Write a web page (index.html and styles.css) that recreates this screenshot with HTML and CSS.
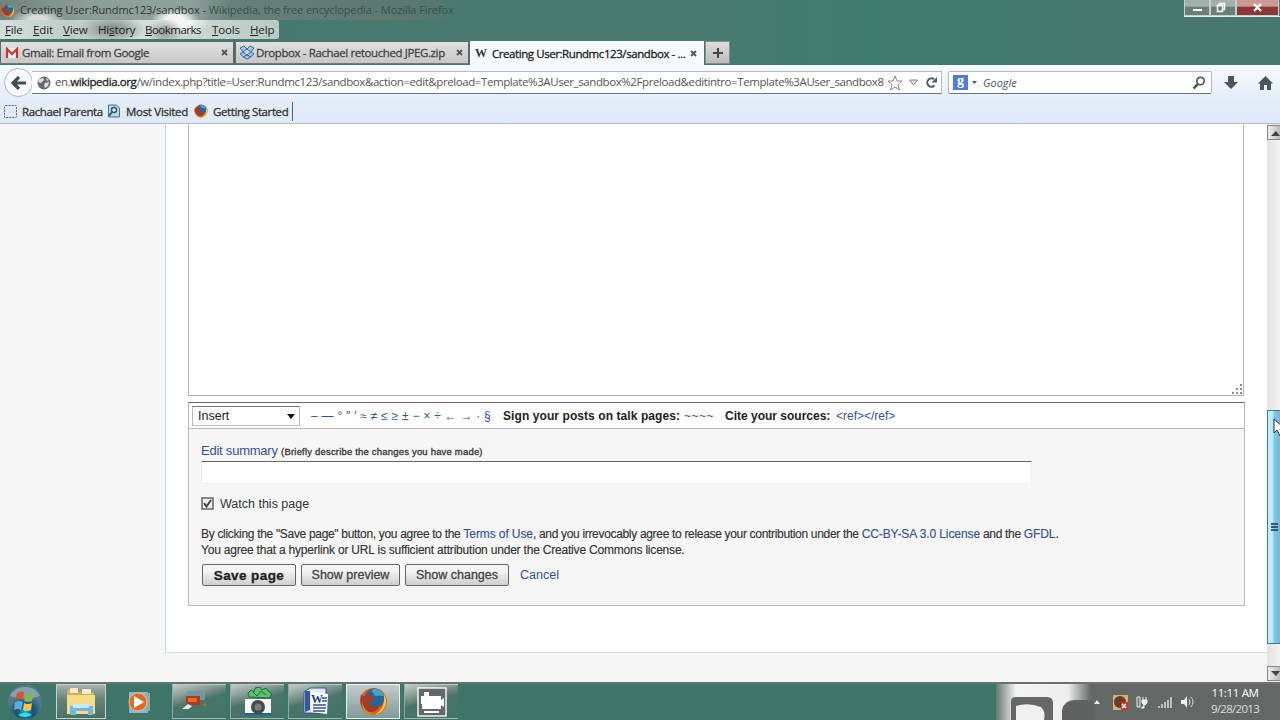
FILE: index.html
```html
<!DOCTYPE html>
<html lang="en">
<head>
    <meta charset="UTF-8">
    <title>Creating User:Rundmc123/sandbox</title>
    <link rel="stylesheet" href="styles.css">
</head>
<body>
    <svg class="defs" width="0" height="0">
        <symbol id="firefox" viewBox="0 0 28 28">
            <circle cx="14" cy="14" r="13" fill="#d9601d"/>
            <circle cx="15" cy="11" r="9.5" fill="#236799"/>
            <path d="M12 3c5-3 11 0 12 6-4-2-6 1-9-1z" fill="#4ba4c8"/>
            <path d="M2 7c2 2 3 2 5 2 1-2 3-3 5-3-1 3 0 4 3 5-2 3-5 3-5 5 2 4 7 4 10 1-1 6-6 8-11 7C3 22 0 15 2 7z" fill="#a43b25"/>
            <path d="M24 7c5 8 1 18-9 20 8-5 10-11 9-20z" fill="#f5ca35"/>
            <path d="M3 14c1 7 5 11 12 12-7 2-13-4-12-12z" fill="#ee8b20"/>
        </symbol>
    </svg>

    <header class="frame">
        <div class="titlebar">
            <svg class="title-icon" width="14" height="15"><use href="#firefox"/></svg>
            <span class="title-text">Creating User:Rundmc123/sandbox - <i>Wikipedia, the free encyclopedia - Mozilla Firefox</i></span>
            <div class="window-buttons">
                <span class="win-btn"><svg width="24" height="15"><path d="M8 9h9v2H8z" fill="#fff"/></svg></span>
                <span class="win-btn"><svg width="24" height="15"><path d="M6.500 5.500h5v6h-5zM8.500 5V3.500h5v6H12" fill="none" stroke="#fff" stroke-width="1.500"/></svg></span>
                <span class="win-btn close"><svg width="42" height="15"><path d="M17 4l7 7M24 4l-7 7" stroke="#fff" stroke-width="2.200"/></svg></span>
            </div>
        </div>
        <nav class="menubar">
            <span class="m-file"><u>F</u>ile</span>
            <span class="m-edit"><u>E</u>dit</span>
            <span class="m-view"><u>V</u>iew</span>
            <span class="m-history">Hi<u>s</u>tory</span>
            <span class="m-bookmarks"><u>B</u>ookmarks</span>
            <span class="m-tools"><u>T</u>ools</span>
            <span class="m-help"><u>H</u>elp</span>
        </nav>
        <div class="tabs">
            <div class="tab">
                <svg width="14" height="12" viewBox="0 0 14 12"><path d="M1 1h12v10H1z" fill="#eee"/><path d="M2 11V2l5 5 5-5v9" fill="none" stroke="#bd3934" stroke-width="2.200"/></svg>
                <span class="tab-text">Gmail: Email from Google</span>
                <svg class="x" width="7" height="7"><path d="M1 1l5 5M6 1L1 6" stroke="#555" stroke-width="1.800"/></svg>
            </div>
            <div class="tab">
                <svg width="16" height="15" viewBox="0 0 16 15"><g fill="#9fcbee" stroke="#316b9e"><path d="M1 3l4-2 3 3-4 3zM15 3l-4-2-3 3 4 3zM1 9l3-2 4 3-3 2zM15 9l-3-2-4 3 3 2z"/><path d="M4 12l4-2 4 2-4 2z"/></g></svg>
                <span class="tab-text">Dropbox - Rachael retouched JPEG.zip</span>
                <svg class="x" width="7" height="7"><path d="M1 1l5 5M6 1L1 6" stroke="#555" stroke-width="1.800"/></svg>
            </div>
            <div class="tab active">
                <span class="wiki">W</span>
                <span class="tab-text">Creating User:Rundmc123/sandbox - ...</span>
                <svg class="x" width="7" height="7"><path d="M1 1l5 5M6 1L1 6" stroke="#555" stroke-width="1.800"/></svg>
            </div>
            <div class="new-tab"><svg width="12" height="12"><path d="M6 1v10M1 6h10" stroke="#444" stroke-width="2"/></svg></div>
        </div>
    </header>

    <div class="navbar">
        <span class="back"><svg width="16" height="14" viewBox="0 0 16 14"><path d="M15 7H3M8 1L2 7l6 6" fill="none" stroke="#444d52" stroke-width="3.200"/></svg></span>
        <div class="urlbar">
            <svg width="14" height="14" viewBox="0 0 14 14"><circle cx="7" cy="7" r="6.500" fill="#666b70"/><path d="M2 3l4-1 1 2-3 3-3-1zM8 7l4-1-1 4-3 2-1-3zM9 2l3 2-2 1z" fill="#dce0e2"/></svg>
            <span class="url">en.<b>wikipedia.org</b>/w/index.php?title=User:Rundmc123/sandbox&amp;action=edit&amp;preload=Template%3AUser_sandbox%2Fpreload&amp;editintro=Template%3AUser_sandbox8</span>
            <svg class="star" width="16" height="16" viewBox="0 0 16 16"><path d="M8 1l2 5h5l-4 3.500 1.500 5.500L8 12l-4.500 3L5 9.500 1 6h5z" fill="#fff" stroke="#888"/></svg>
            <svg class="drop" width="9" height="7"><path d="M.5 1h8l-4 5z" fill="#ddd" stroke="#888"/></svg>
            <svg class="reload" width="13" height="13" viewBox="0 0 13 13"><path d="M9.500 9.500A4.200 4.200 0 1 1 9 3.200" fill="none" stroke="#505a60" stroke-width="2"/><path d="M6.500 6.500H12V1z" fill="#505a60"/></svg>
        </div>
        <div class="search">
            <span class="google">g</span>
            <svg width="5" height="4"><path d="M0 0h5L2.500 3z" fill="#555"/></svg>
            <em>Google</em>
            <svg class="lens" width="14" height="14" viewBox="0 0 14 14"><circle cx="8.500" cy="5" r="3.700" fill="none" stroke="#50575c" stroke-width="1.700"/><path d="M6 8l-4.500 4.500" stroke="#50575c" stroke-width="2.500"/></svg>
        </div>
        <svg class="download" width="14" height="15" viewBox="0 0 14 15"><path d="M4 1h6v6h4l-7 7-7-7h4z" fill="#4c555b"/></svg>
        <svg class="home" width="15" height="14" viewBox="0 0 15 14"><path d="M7.500 0L15 7.500h-2V14H9V9H6v5H2V7.500H0z" fill="#4c555b"/></svg>
    </div>

    <div class="bookmarks">
        <svg width="13" height="13"><rect x=".5" y=".5" width="12" height="12" rx="1" fill="none" stroke="#586370" stroke-dasharray="2 1"/></svg>
        <span class="b-rachael">Rachael Parenta</span>
        <svg width="14" height="14" viewBox="0 0 14 14"><path d="M1.500 1h8l3 3v9h-11z" fill="#b9d5e9" stroke="#4d7190"/><circle cx="7" cy="6" r="2.500" fill="#e9f4ff" stroke="#315879" stroke-width="1.500"/><path d="M5 8l-3 4" stroke="#315879" stroke-width="2"/></svg>
        <span class="b-most">Most Visited</span>
        <svg width="14" height="14"><use href="#firefox"/></svg>
        <span class="b-start">Getting Started</span>
    </div>

    <main class="viewport">
        <div class="page">
            <div class="textarea">
                <svg width="10" height="10"><path d="M8 0h2v2H8zM8 4h2v2H8zM4 4h2v2H4zM8 8h2v2H8zM4 8h2v2H4zM0 8h2v2H0z" fill="#888"/></svg>
            </div>
            <div class="edit-box">
                <div class="insert-bar">
                    <div class="select"><span>Insert</span><svg width="8" height="5"><path d="M0 0h8L4 5z" fill="#111"/></svg></div>
                    <div class="symbols"><a>–</a><a>—</a><a>°</a><a>″</a><a>′</a><a>≈</a><a>≠</a><a>≤</a><a>≥</a><a>±</a><a>−</a><a>×</a><a>÷</a><a>←</a><a>→</a><a>·</a><a>§</a></div>
                    <b class="sign">Sign your posts on talk pages:</b>
                    <a class="tildes">~~~~</a>
                    <b class="cite">Cite your sources:</b>
                    <a class="ref">&lt;ref&gt;&lt;/ref&gt;</a>
                </div>
                <div class="options">
                    <div class="summary-label"><a>Edit summary</a> <small>(Briefly describe the changes you have made)</small></div>
                    <div class="summary-input"></div>
                    <div class="watch">
                        <svg width="13" height="13"><rect x="1" y="1" width="11" height="11" fill="#eee" stroke="#666" stroke-width="1.500"/><path d="M3 6l2.500 3.500L10 3" fill="none" stroke="#444" stroke-width="2"/></svg>
                        <span>Watch this page</span>
                    </div>
                    <p class="terms">
                        <span class="line-one">By clicking the "Save page" button, you agree to the <a>Terms of Use</a>, and you irrevocably agree to release your contribution under the <a>CC-BY-SA 3.0 License</a> and the <a>GFDL</a>.</span><br>
                        <span class="line-two">You agree that a hyperlink or URL is sufficient attribution under the Creative Commons license.</span>
                    </p>
                    <div class="buttons">
                        <button class="save">Save page</button>
                        <button class="preview">Show preview</button>
                        <button class="changes">Show changes</button>
                        <a>Cancel</a>
                    </div>
                </div>
            </div>
        </div>
        <div class="scrollbar">
            <div class="arrow"><svg width="9" height="6"><path d="M0 6l5-5 4 5z" fill="#444"/></svg></div>
            <div class="thumb"><i></i><i></i><i></i></div>
            <div class="arrow"><svg width="9" height="6"><path d="M0 0h9L5 5z" fill="#444"/></svg></div>
            <svg class="cursor" width="12" height="19" viewBox="0 0 12 19"><path d="M1 1v14l3-3 3 6 3-2-3-5h5z" fill="#fff" stroke="#333"/></svg>
        </div>
    </main>

    <footer class="taskbar">
        <div class="start">
            <svg width="36" height="36" viewBox="0 0 36 36">
                <defs><radialGradient id="orb" cy=".8"><stop offset="0" stop-color="#26a7c5"/><stop offset=".5" stop-color="#164e70"/><stop offset="1" stop-color="#53798b"/></radialGradient></defs>
                <circle cx="18" cy="18" r="17" fill="url(#orb)"/><path d="M3 12C7 1 28-1 33 12c-8 3-21 4-30 0z" fill="#b8cbd3" opacity=".5"/>
                <path d="M10 9q4-3 7-1l-1 8q-4-2-8 0z" fill="#cf5735"/><path d="M19 9q4 2 8 0l-2 8q-4 2-8 0z" fill="#82b75c"/><path d="M8 18q4-2 8 0l-2 8q-3-2-7 0z" fill="#5aaddd"/><path d="M17 19q4 2 8 0l-1 7q-5 2-8 0z" fill="#f4c64f"/><path d="M11 31q7-5 14 0-7 4-14 0z" fill="#33dce6"/>
            </svg>
        </div>
        <div class="task bright">
            <svg width="30" height="29" viewBox="0 0 30 29"><path d="M1 3h8l2 2h17v22H1z" fill="#d4ae58"/><path d="M4 1h8v5H4zM16 2h9v5h-9z" fill="#f7edcd"/><path d="M1 8h28v19H1z" fill="#f3dc8c"/><path d="M4 19h23v9h-5v-4H10v4H4z" fill="#72b8dd"/><path d="M7 17h16v4H7z" fill="#c8e9f5"/></svg>
        </div>
        <div class="task plain">
            <svg width="24" height="24" viewBox="0 0 24 24"><path d="M2 2h17v21H2z" fill="#8cb5d6"/><path d="M20 2v21M22 3v18" stroke="#d8e8f6"/><circle cx="11" cy="12" r="9" fill="#df6a24" stroke="#f0ba8e"/><path d="M7 6l10 6-10 6z" fill="#fff"/></svg>
        </div>
        <div class="task fade">
            <svg class="toolbox" width="28" height="24" viewBox="0 0 28 24"><path d="M8 1h18v9H8z" fill="#77949f"/><path d="M7 6h14v9H7z" fill="#ad3b22"/><path d="M9 8h9v4H9z" fill="#e56b35"/><path d="M3 19l6-5 4 2-3 3z" fill="#e2e8e7"/><path d="M23 15l4-3v5z" fill="#8b7b55"/></svg>
        </div>
        <div class="task fade">
            <svg width="28" height="29" viewBox="0 0 28 29"><path d="M5 10l-1-4 3-3 3 2 1-4 5-1 2 3 4-2 3 4 3 2-3 4z" fill="#5abf6e" stroke="#226b3d"/><path d="M9 5l4 4 4-5 5 4" fill="none" stroke="#226b3d"/><path d="M1 12h26v14H1z" fill="#f4f6f4"/><path d="M0 26h28v2H0z" fill="#25658b"/><circle cx="14" cy="20" r="7" fill="#444b4a"/><circle cx="14" cy="20" r="3.500" fill="#777e7d"/></svg>
        </div>
        <div class="task fade">
            <svg width="28" height="29" viewBox="0 0 28 29"><path d="M2 5l6-4h16v25H2z" fill="#e3e9f4" stroke="#315292"/><path d="M3 4h5v19l-5 2z" fill="#3658a2"/><path d="M9 5l17 2-1 20-16-2z" fill="#fff"/><path d="M20 11h5M20 14h5M11 18h13M11 21h13M11 24h12" stroke="#35528b" stroke-width="1.500"/><text x="9" y="16" font-family="Liberation Serif, serif" font-size="12" font-weight="bold" fill="#263e80">W</text></svg>
        </div>
        <div class="task current"><svg width="29" height="29"><use href="#firefox"/></svg></div>
        <div class="task fade">
            <svg width="30" height="30" viewBox="0 0 30 30"><path d="M1 1h28v28H1z" fill="#626a69" stroke="#f4f4f4" stroke-width="1.500"/><path d="M4 9h3V5h5v4h12v4l3-2v9l-3-2v4H5v-5H4zM7 24h15v2H7z" fill="#fff"/></svg>
        </div>
        <div class="tray">
            <svg class="wallpaper" width="97" height="36" viewBox="0 0 97 36"><path d="M15 36V17q0-4 5-4h31q6 0 6 6v17z" fill="#656867"/><path d="M20 36V22q12-4 25 1 5 5 3 13z" fill="#f0f0f0"/><path d="M66 36V27q1-10 12-11h19v20z" fill="#5f6261"/></svg>
            <svg class="up" width="6" height="4"><path d="M0 4l3-4 3 4z" fill="#eee"/></svg>
            <svg class="badge" width="15" height="15"><path d="M0 0h15v15H0z" fill="#d0b17a"/><circle cx="7" cy="7" r="6" fill="#6a3b27"/><path d="M8 7h7v8H8z" fill="#cf302d"/><path d="M9 9l4 4M13 9l-4 4" stroke="#fff" stroke-width="1.500"/></svg>
            <svg class="plug" width="12" height="14"><path d="M1 2h3v10H1z" fill="#777" stroke="#eee"/><path d="M6 5h5v3L9 10H8L6 8zM7 5V2M10 5V2M8 10v3H5" fill="#eee" stroke="#eee"/></svg>
            <svg class="signal" width="14" height="11"><path d="M1 11V9M4 11V7M7 11V5M10 11V3M13 11V0" stroke="#ddd" stroke-width="1.500"/></svg>
            <svg class="sound" width="13" height="12"><path d="M0 4h3l3-4v12L3 8H0z" fill="#eee"/><path d="M8 3q2 3 0 6M10 1q4 5 0 10" fill="none" stroke="#ddd"/></svg>
            <div class="clock"><span class="time">11:11 AM</span><span class="date">9/28/2013</span></div>
        </div>
    </footer>
</body>
</html>
```
FILE: styles.css
```css
* {
    box-sizing: border-box;
}

body {
    margin: 0;
    width: 1280px;
    height: 720px;
    overflow: hidden;
    display: flex;
    flex-direction: column;
    font-family: "Open Sans", "Noto Sans", sans-serif;
    font-size: 12px;
    color: #333;
}

svg {
    display: block;
    flex: none;
}

.defs {
    position: absolute;
}

span, b, a {
    white-space: nowrap;
}

/* Window frame */
.frame {
    height: 65px;
    flex: none;
    background:
        radial-gradient(ellipse at 105% 10%, #6a7771 0, #657671 70px, transparent 150px),
        linear-gradient(90deg, #407970, #4b796f 46%, #407b70 68%, #49776d);
}

.titlebar {
    height: 20px;
    display: flex;
    background:
        radial-gradient(ellipse 24px 12px at 175px 20px, #f2f5f4 40%, transparent),
        radial-gradient(ellipse 28px 10px at 38px 19px, #d5dedb 30%, transparent),
        linear-gradient(90deg, #70837d, #8b9e98 90px, #8fa39d 190px, #688079 230px, #5c7770 410px, transparent 460px);
}

.title-icon {
    margin: 3px 0 0 1px;
}

.title-text {
    margin-left: 5px;
    width: 500px;
    line-height: 20px;
    font-size: 11px;
    letter-spacing: -0.08px;
}

.title-text i {
    font-style: normal;
    color: #35504a;
}

.window-buttons {
    display: flex;
    margin-left: auto;
    width: 96px;
    height: 17px;
    border-bottom: 1px solid #eee;
}

.win-btn {
    width: 26px;
    height: 16px;
    border: 1px solid #c6cfcc;
    border-top: 0;
    background: linear-gradient(#a4b0ac 40%, #697e76 50%);
}

.win-btn.close {
    width: 43px;
    background: linear-gradient(#cb9994 40%, #8b3934 50%);
}

.menubar {
    width: 279px;
    height: 19px;
    border-radius: 0 3px 3px 0;
    display: flex;
    padding-left: 5px;
    line-height: 19px;
    font-size: 11.5px;
    letter-spacing: -0.15px;
    color: #222;
    background:
        radial-gradient(ellipse 34px 14px at 112px 9px, #8b9692 20%, transparent),
        radial-gradient(ellipse 18px 14px at 165px 12px, #8f9a96, transparent),
        radial-gradient(ellipse 30px 14px at 180px 2px, #f2f5f4 30%, transparent),
        linear-gradient(90deg, #d3dfdc, #becdc7 70px, #d6dedb 140px, #b8cbc3);
}

.m-file { width: 28px; }
.m-edit { width: 30px; }
.m-view { width: 35px; }
.m-history { width: 47px; }
.m-bookmarks { width: 67px; letter-spacing: -0.5px; }
.m-tools { width: 38px; }

.tabs {
    height: 26px;
    padding-top: 2px;
    display: flex;
}

.tab {
    width: 235px;
    height: 23px;
    padding: 0 5px 0 4px;
    border: 1px solid #596b67;
    border-right-width: 2px;
    border-bottom-color: #777;
    display: flex;
    align-items: center;
    gap: 3px;
    font-size: 11.5px;
    letter-spacing: -0.39px;
    background: linear-gradient(#e0e0e0, #c7c7c7);
}

.tab:nth-child(2) svg:first-child {
    margin: 0 -2px 0 -1px;
}

.tab .x {
    margin-left: auto;
}

.tab-text {
    color: #444;
    -webkit-text-stroke: 0.3px;
}

.tab.active {
    width: 234px;
    height: 24px;
    padding: 0 7px 0 5px;
    border: 0;
    letter-spacing: -0.43px;
    background: #f6f9fd;
}

.tab.active .tab-text {
    color: #222;
}

.wiki {
    font: bold 12px "Liberation Serif", serif;
    width: 14px;
}

.new-tab {
    margin-left: 1px;
    width: 25px;
    height: 23px;
    border: 1px solid #848e8b;
    background: linear-gradient(#ddd, #bbb);
    display: flex;
    align-items: center;
    justify-content: center;
}

/* Toolbars */
.navbar {
    height: 35px;
    flex: none;
    display: flex;
    align-items: center;
    background: linear-gradient(#f7fafe, #e4edfa);
}

.back {
    width: 29px;
    height: 29px;
    margin-left: 4px;
    border: 1px solid #adb5bf;
    border-radius: 50%;
    background: #f8fafc;
    display: flex;
    align-items: center;
    justify-content: center;
}

.urlbar {
    width: 910px;
    height: 23px;
    margin-left: -1px;
    padding-left: 5px;
    border: 1px solid #b3bbc5;
    border-left: 0;
    border-bottom-color: #69757f;
    background: #fff;
    display: flex;
    align-items: center;
}

.url {
    width: 829px;
    margin-left: 4px;
    font-size: 11.5px;
    letter-spacing: -0.41px;
    line-height: 20px;
    padding-bottom: 1px;
    color: #555;
}

.url b {
    font-weight: normal;
    color: #222;
    -webkit-text-stroke: 0.3px;
}

.star { margin-left: 3px; }
.drop { margin-left: 6px; }
.reload { margin-left: 7px; }

.search {
    width: 264px;
    height: 23px;
    margin-left: 6px;
    padding: 0 5px 0 4px;
    border: 1px solid #b3bbc5;
    border-bottom-color: #69757f;
    border-radius: 2px;
    background: #fff;
    display: flex;
    align-items: center;
    gap: 4px;
    font-size: 11px;
    color: #555;
}

.search em {
    margin: 0 0 1px 2px;
}

.google {
    width: 15px;
    height: 15px;
    background: #517bd5;
    color: #fff;
    font: bold 14px/11px "Liberation Serif", serif;
    text-align: center;
}

.lens { margin-left: auto; }
.download { margin-left: 12px; }
.home { margin-left: 20px; }

.bookmarks {
    height: 24px;
    flex: none;
    display: flex;
    align-items: center;
    padding: 0 0 1px 4px;
    font-size: 11.5px;
    letter-spacing: -0.4px;
    border-bottom: 1px solid #b3bdc9;
    background: linear-gradient(#e4edfa, #dfeaf8);
}

.bookmarks span {
    margin-left: 5px;
    -webkit-text-stroke: 0.3px;
}

.bookmarks .b-rachael { width: 85px; }

.bookmarks .b-most {
    width: 68px;
    letter-spacing: -0.3px;
}

.bookmarks .b-start {
    width: 80px;
    height: 19px;
    line-height: 19px;
    border-right: 1px solid #56616c;
}

/* Page */
.viewport {
    height: 558px;
    flex: none;
    display: flex;
    background: #f6f6f6;
    font-family: "Liberation Sans", Arial, sans-serif;
}

.viewport a {
    color: #36528f;
}

.page {
    width: 1102px;
    height: 529px;
    margin-left: 165px;
    padding-left: 22px;
    border-left: 1px solid #c9dcea;
    border-bottom: 1px solid #dbe4eb;
    background: #fff;
}

.textarea {
    width: 1056px;
    height: 272px;
    border: 1px solid #b5b5b5;
    border-top: 0;
    display: flex;
    align-items: flex-end;
    justify-content: flex-end;
    padding: 1px;
}

.edit-box {
    width: 1057px;
    height: 204px;
    margin-top: 6px;
    border: 1px solid #b8b8b8;
    border-top-color: #666;
    background: #f6f6f6;
}

.insert-bar {
    height: 26px;
    border-bottom: 1px solid #bbb;
    background: #fff;
    display: flex;
    align-items: center;
    padding-left: 3px;
    color: #222;
}

.select {
    width: 108px;
    height: 20px;
    padding: 1px 4px 0 5px;
    border: 1px solid #bbb;
    border-top-color: #777;
    display: flex;
    align-items: center;
    justify-content: space-between;
    font-size: 12.5px;
}

.symbols {
    width: 180px;
    margin-left: 11px;
    display: flex;
    justify-content: space-between;
}

.sign {
    margin-left: 12px;
    width: 181px;
    letter-spacing: 0.08px;
}

.tildes {
    width: 41px;
    letter-spacing: 0.5px;
}

.cite { width: 111px; }

.options {
    padding: 13px 12px 0;
}

.summary-label {
    height: 19px;
    line-height: 17px;
    font-size: 13px;
    letter-spacing: -0.23px;
}

.summary-label small {
    font-size: 9.5px;
    letter-spacing: 0.19px;
    -webkit-text-stroke: 0.3px;
}

.summary-input {
    width: 831px;
    height: 23px;
    border: 1px solid #eee;
    border-top-color: #666;
    background: #fff;
}

.watch {
    display: flex;
    align-items: center;
    height: 16px;
    margin-top: 12px;
    gap: 6px;
    font-size: 12.5px;
}

.watch svg {
    margin-bottom: 2px;
}

.terms {
    margin: 14px 0 0;
    font-size: 12px;
    line-height: 16px;
    -webkit-text-stroke: 0.15px;
}

.line-one { letter-spacing: -0.32px; }
.line-one a { letter-spacing: -0.1px; }
.line-two { letter-spacing: -0.2px; }

.buttons {
    margin: 6px 0 0 1px;
    display: flex;
    align-items: center;
    gap: 5px;
}

.buttons button {
    height: 22px;
    padding: 0;
    border: 1px solid #666;
    border-radius: 2px;
    background: linear-gradient(#f4f4f4 30%, #cfcfcf);
    font: 12.5px "Liberation Sans", Arial, sans-serif;
    color: #444;
    -webkit-text-stroke: 0.3px;
}

.buttons .save {
    width: 94px;
    font-size: 13.5px;
    font-weight: bold;
    letter-spacing: 0.4px;
    color: #222;
}

.buttons .preview { width: 99px; }
.buttons .changes { width: 104px; }

.buttons a {
    margin-left: 6px;
    font-size: 12.5px;
}

.scrollbar {
    width: 13px;
    height: 558px;
    position: relative;
    display: flex;
    flex-direction: column;
    background: linear-gradient(90deg, #e2e2e2, #f3f3f3);
}

.arrow {
    height: 15px;
    margin-top: 1px;
    border: 1px solid #888;
    border-right: 0;
    background: linear-gradient(90deg, #eee, #bbb);
    display: flex;
    align-items: center;
    padding-left: 3px;
}

.thumb {
    height: 234px;
    margin: 270px 0 21px;
    border: 1px solid #397c9b;
    border-right: 0;
    background: linear-gradient(90deg, #c5eaf8 35%, #70cbea 55%, #8eaecb);
    display: flex;
    flex-direction: column;
    align-items: center;
    justify-content: center;
    gap: 1px;
}

.thumb i {
    width: 7px;
    height: 2px;
    background: #305d75;
}

.cursor {
    position: absolute;
    left: 6px;
    top: 294px;
}

/* Taskbar */
.taskbar {
    height: 38px;
    flex: none;
    border-top: 2px solid #66736f;
    display: flex;
    background: #3f7469;
}

.start {
    width: 49px;
    margin-left: 7px;
}

.task {
    width: 54px;
    height: 35px;
    margin-right: 4px;
    display: flex;
    align-items: center;
    justify-content: center;
}

.task.bright {
    width: 50px;
    border: 1px solid #c8d1ce;
    background: linear-gradient(#a6b1ad, #66817a 45%, #4b7067);
}

.task.plain {
    width: 58px;
}

.task.fade {
    border-top: 1px solid #bbc9c5;
    border-bottom: 1px solid #a2b7b1;
    border-left: 1px solid #91a9a2;
    background: linear-gradient(165deg, #c3ccc9, #7f958e 30%, #4a746a 48%, #427267);
}

.task.current {
    border: 1px solid #edf1f0;
    background: linear-gradient(#c4cccc, #829a95);
}

.toolbox {
    margin-right: 14px;
}

.tray {
    width: 284px;
    margin-left: auto;
    display: flex;
    align-items: center;
    background: #646766;
}

.wallpaper {
    background: linear-gradient(90deg, #677671, #f4f4f4 20px, #eee 72px, #646766 95px);
}

.up { margin-left: 1px; }
.badge { margin-left: 13px; }
.plug { margin-left: 8px; }
.signal { margin-left: 10px; }
.sound { margin-left: 9px; }

.clock {
    width: 58px;
    margin: 0 0 2px 12px;
    display: flex;
    flex-direction: column;
    align-items: center;
    font-size: 11.5px;
    line-height: 16px;
    letter-spacing: -0.35px;
    color: #fff;
}

.date {
    color: #ddd;
    letter-spacing: -0.7px;
}
```
